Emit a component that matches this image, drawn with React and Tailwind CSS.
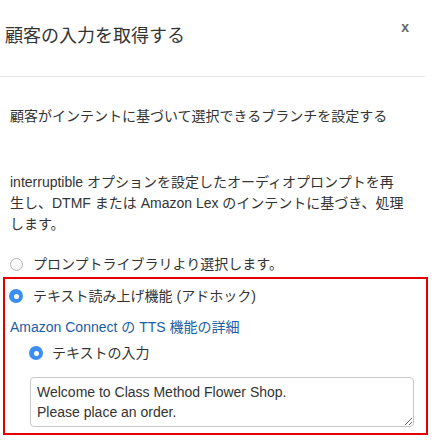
import React from "react";

function Radio({ checked }) {
  if (checked) {
    return (
      <span className="flex h-[14px] w-[14px] shrink-0 items-center justify-center rounded-full bg-[#3b8ef5]">
        <span className="h-[5px] w-[5px] rounded-full bg-white" />
      </span>
    );
  }
  return (
    <span className="h-[13px] w-[13px] shrink-0 rounded-full border border-[#b5b5b5] bg-gradient-to-b from-white to-[#f3f3f3]" />
  );
}

export default function App() {
  return (
    <div
      className="relative h-[444px] w-[442px] overflow-hidden bg-white text-[#333]"
      style={{ fontFamily: '"Liberation Sans", "Noto Sans CJK JP", sans-serif' }}
    >
      <div className="flex w-[425px] items-start justify-between border-b border-[#e5e5e5] pl-[5px] pt-[26px] h-[77px]">
        <div className="text-[18px] leading-[20px] text-[#333]">顧客の入力を取得する</div>
        <div className="mr-[16px] -mt-[9px] text-[14px] font-bold leading-[20px] text-[#666]">x</div>
      </div>

      <div className="pl-[10px]">
        <p className="mt-[29px] text-[14px] leading-[20px]">
          顧客がインテントに基づいて選択できるブランチを設定する
        </p>
        <p className="mt-[46px] w-[395px] text-[14px] leading-[21px]">
          interruptible オプションを設定したオーディオプロンプトを再生し、DTMF または Amazon Lex のインテントに基づき、処理します。
        </p>
      </div>

      <div className="mt-[19px] flex h-[20px] items-center pl-[10px] text-[14px]">
        <Radio />
        <span className="ml-[10px]">プロンプトライブラリより選択します。</span>
      </div>

      <div className="ml-[3px] mt-[3px] w-[425px] border-2 border-[#e00000] pb-[6px]">
        <div className="mt-[7px] flex h-[20px] items-center pl-[4px] text-[14px]">
          <Radio checked />
          <span className="ml-[10px]">テキスト読み上げ機能 (アドホック)</span>
        </div>
        <div className="mt-[11px] h-[20px] pl-[5px] text-[14px] leading-[20px] text-[#1a5ea8]">
          Amazon Connect の TTS 機能の詳細
        </div>
        <div className="mt-[6px] flex h-[20px] items-center pl-[24px] text-[14px]">
          <Radio checked />
          <span className="ml-[9px]">テキストの入力</span>
        </div>
        <div className="mt-[14px] pl-[25px]">
          <textarea
            readOnly
            defaultValue={"Welcome to Class Method Flower Shop.\nPlease place an order."}
            className="block h-[50px] w-[384px] rounded-[4px] border border-[#c8c8c8] px-[6px] pt-[4px] text-[14px] leading-[20px] text-[#333] outline-none"
            style={{ fontFamily: '"Liberation Sans", "Noto Sans CJK JP", sans-serif' }}
          />
        </div>
      </div>
    </div>
  );
}
